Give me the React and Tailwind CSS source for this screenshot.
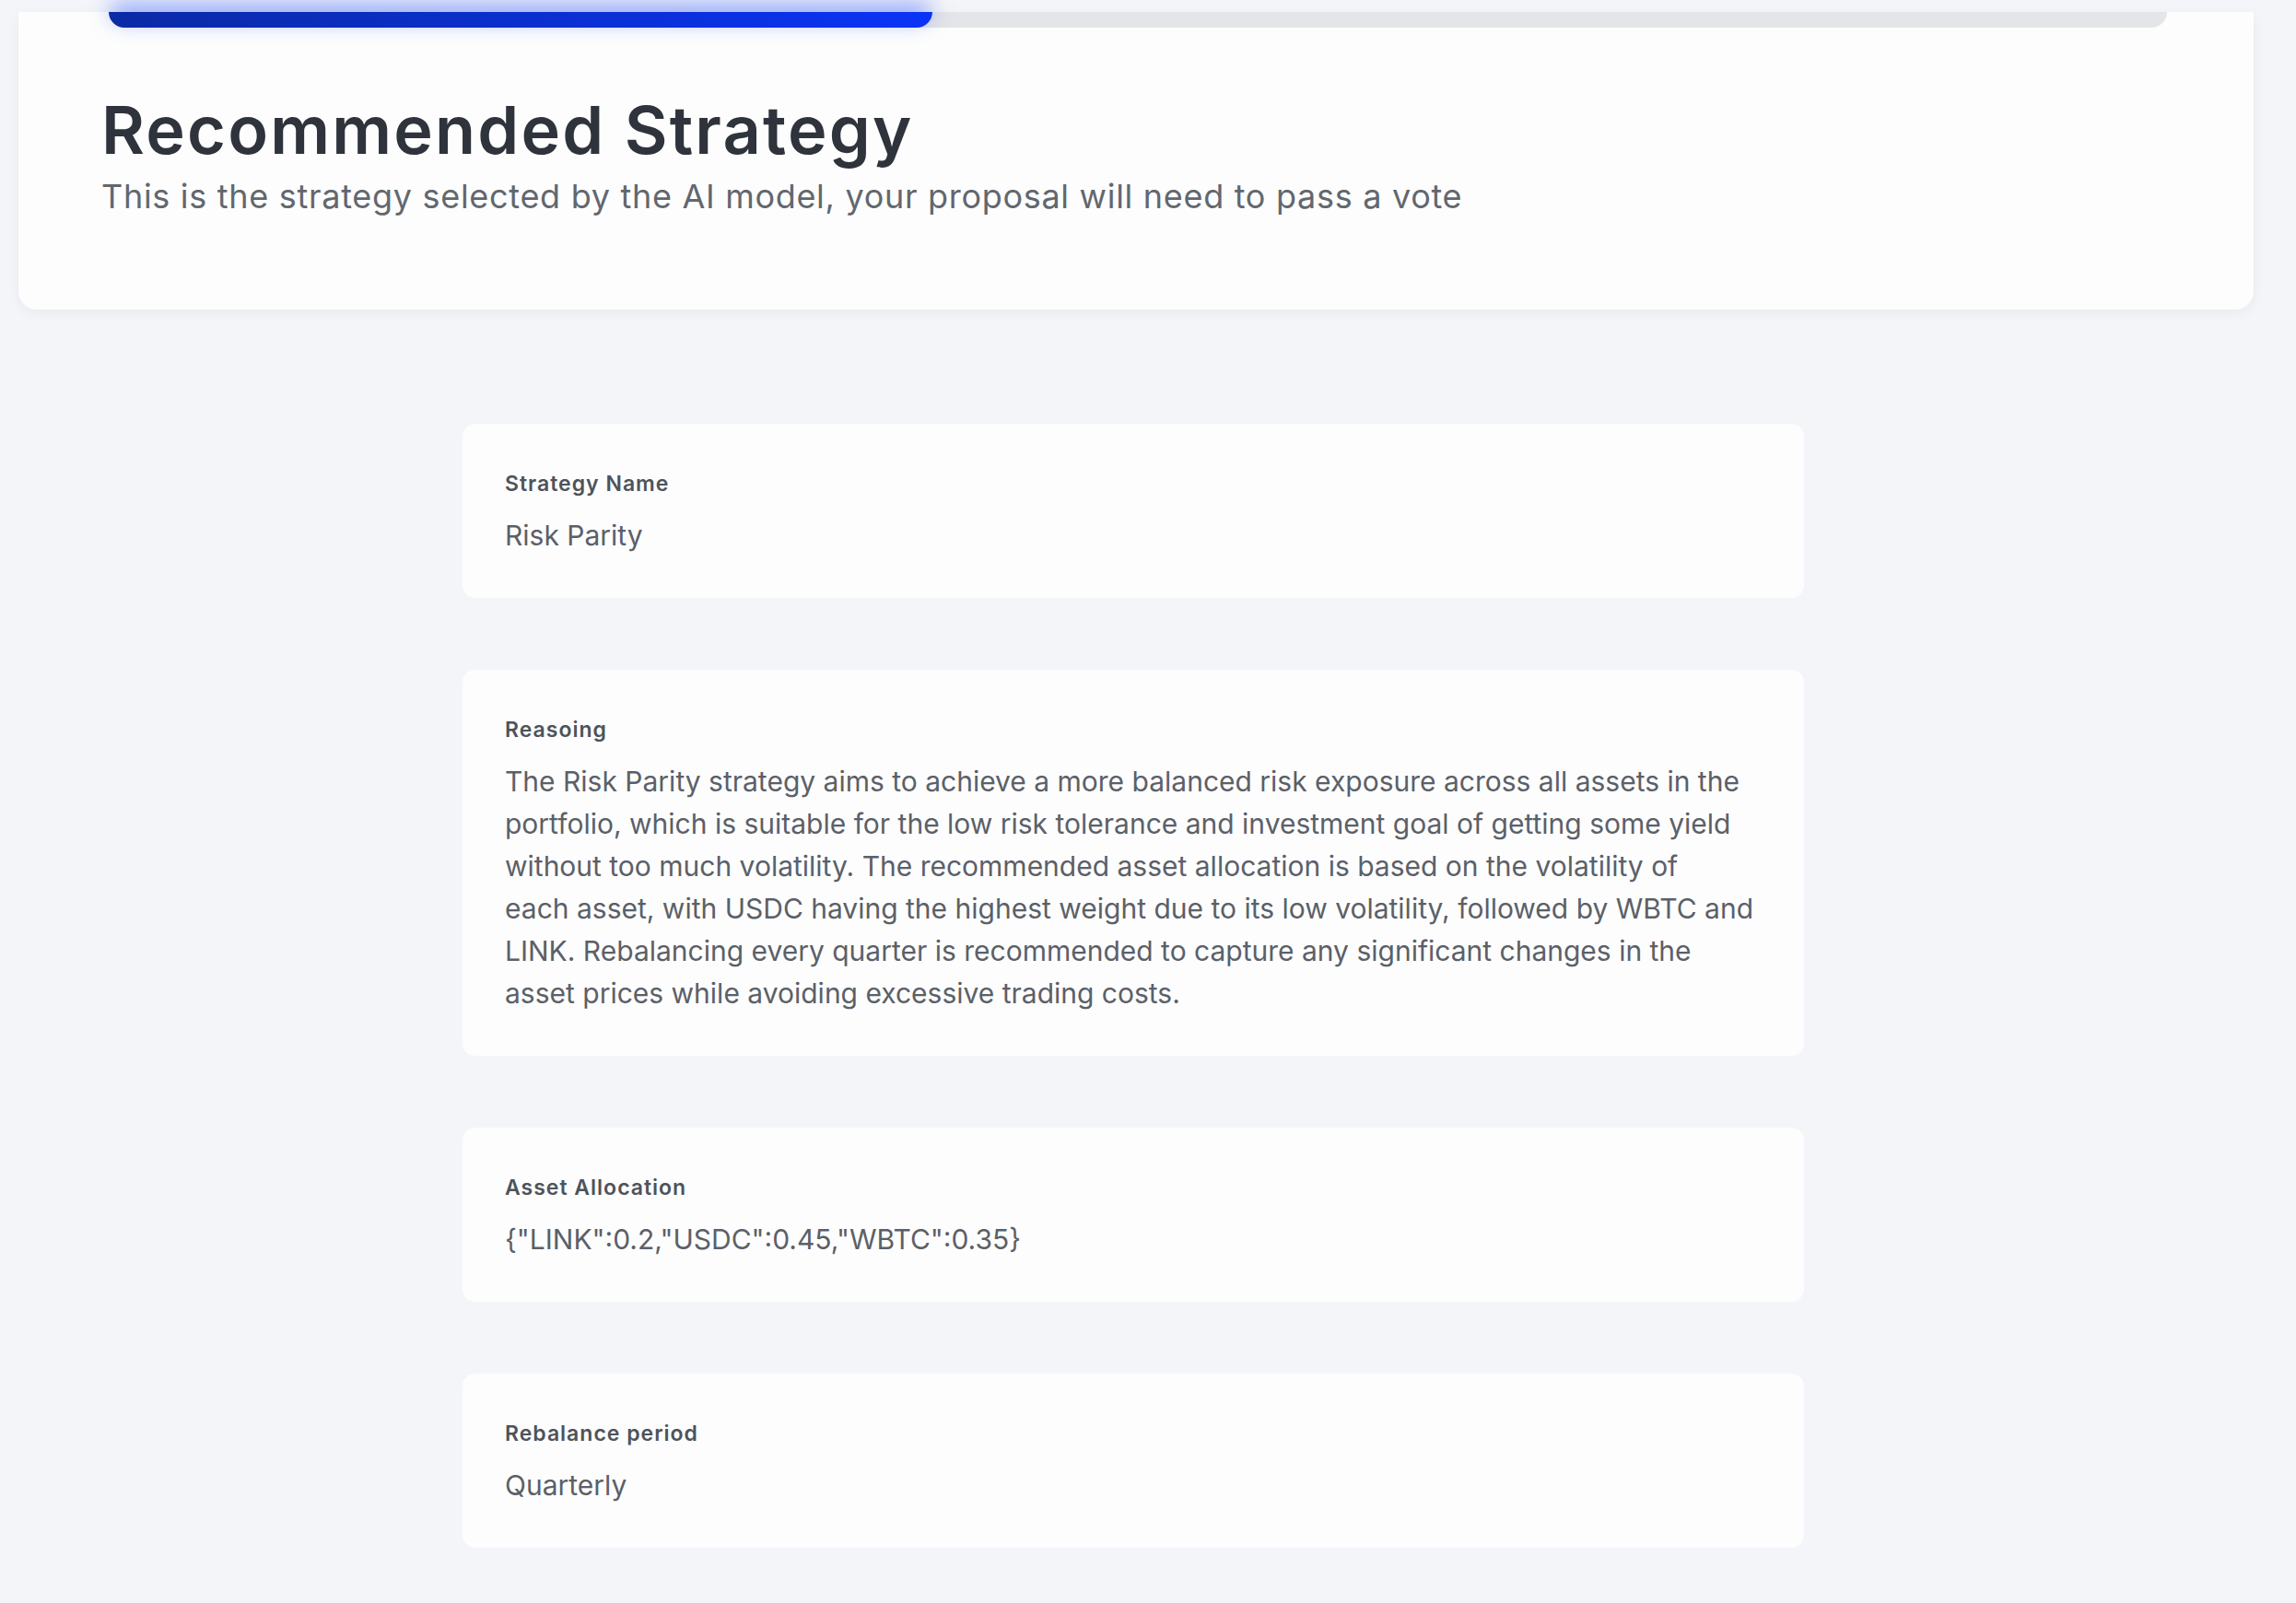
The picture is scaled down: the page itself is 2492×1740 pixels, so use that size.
import React from 'react'

const reasoningLines = [
  'The Risk Parity strategy aims to achieve a more balanced risk exposure across all assets in the',
  'portfolio, which is suitable for the low risk tolerance and investment goal of getting some yield',
  'without too much volatility. The recommended asset allocation is based on the volatility of',
  'each asset, with USDC having the highest weight due to its low volatility, followed by WBTC and',
  'LINK. Rebalancing every quarter is recommended to capture any significant changes in the',
  'asset prices while avoiding excessive trading costs.',
]

const fields = [
  { label: 'Strategy Name', value: 'Risk Parity' },
  {
    label: 'Reasoing',
    value: reasoningLines.map((line, i) => (
      <React.Fragment key={i}>
        {line}
        {i < reasoningLines.length - 1 && <br />}
      </React.Fragment>
    )),
  },
  { label: 'Asset Allocation', value: '{"LINK":0.2,"USDC":0.45,"WBTC":0.35}' },
  { label: 'Rebalance period', value: 'Quarterly' },
]

export default function App() {
  const progress = 40

  return (
    <div className="min-h-screen bg-[#f4f5f8] pt-[13px] pb-[60px] font-['Inter','Noto_Sans',sans-serif]">
      {/* Header */}
      <div className="mx-[20px] w-[2426px] rounded-b-[20px] bg-[#fdfdfd] pl-[90px] pr-[94px] pb-[105px] shadow-[0_4px_14px_rgba(30,40,80,0.05)]">
        <div className="ml-[8px] h-[17px] rounded-b-full bg-[#e4e5e8]">
          <div
            className="h-full rounded-b-full bg-gradient-to-r from-[#0b2aa6] to-[#0b33f6] shadow-[0_-8px_22px_rgba(50,90,255,0.6)]"
            style={{ width: `${progress}%` }}
          />
        </div>
        <h1 className="mt-[75px] text-[72px] leading-[72px] font-semibold text-[#2f333b] tracking-[2.2px]">
          Recommended Strategy
        </h1>
        <p className="mt-[18px] text-[36px] leading-[36px] tracking-[0.7px] text-[#62676f]">
          This is the strategy selected by the AI model, your proposal will need to pass a vote
        </p>
      </div>

      {/* Fields */}
      <div className="ml-[502px] mt-[124px] flex w-[1456px] flex-col gap-[78px]">
        {fields.map((f) => (
          <div key={f.label} className="rounded-[14px] bg-[#fdfdfd] px-[46px] pt-[54px] pb-[45px]">
            <div className="text-[23px] leading-[22px] font-semibold tracking-[1px] text-[#4e535b]">
              {f.label}
            </div>
            <div className="mt-[22px] whitespace-nowrap text-[30px] leading-[46px] text-[#5b6068]">{f.value}</div>
          </div>
        ))}
      </div>
    </div>
  )
}
